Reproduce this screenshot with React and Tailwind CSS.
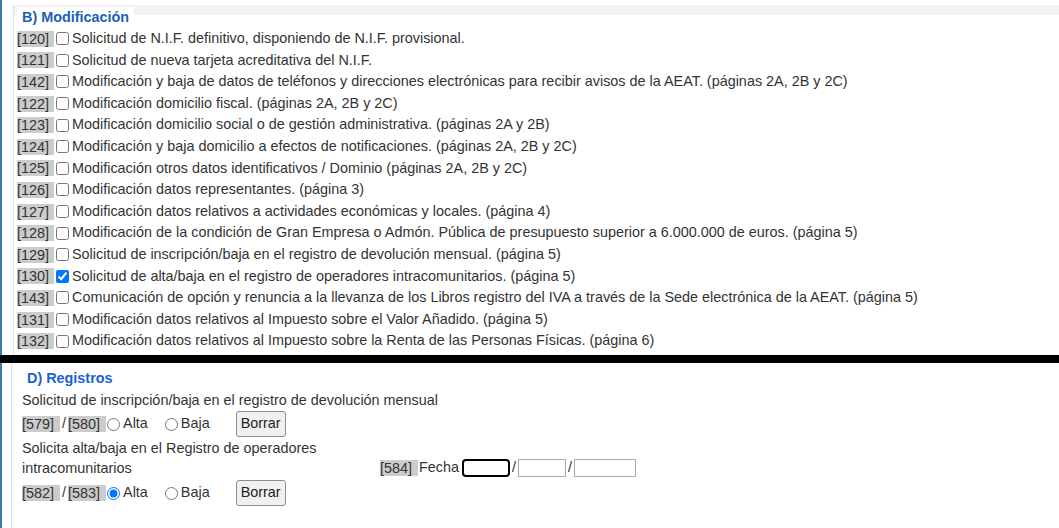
import React from 'react';

const rows = [
  ['120', 'Solicitud de N.I.F. definitivo, disponiendo de N.I.F. provisional.'],
  ['121', 'Solicitud de nueva tarjeta acreditativa del N.I.F.'],
  ['142', 'Modificación y baja de datos de teléfonos y direcciones electrónicas para recibir avisos de la AEAT. (páginas 2A, 2B y 2C)'],
  ['122', 'Modificación domicilio fiscal. (páginas 2A, 2B y 2C)'],
  ['123', 'Modificación domicilio social o de gestión administrativa. (páginas 2A y 2B)'],
  ['124', 'Modificación y baja domicilio a efectos de notificaciones. (páginas 2A, 2B y 2C)'],
  ['125', 'Modificación otros datos identificativos / Dominio (páginas 2A, 2B y 2C)'],
  ['126', 'Modificación datos representantes. (página 3)'],
  ['127', 'Modificación datos relativos a actividades económicas y locales. (página 4)'],
  ['128', 'Modificación de la condición de Gran Empresa o Admón. Pública de presupuesto superior a 6.000.000 de euros. (página 5)'],
  ['129', 'Solicitud de inscripción/baja en el registro de devolución mensual. (página 5)'],
  ['130', 'Solicitud de alta/baja en el registro de operadores intracomunitarios. (página 5)', true],
  ['143', 'Comunicación de opción y renuncia a la llevanza de los Libros registro del IVA a través de la Sede electrónica de la AEAT. (página 5)'],
  ['131', 'Modificación datos relativos al Impuesto sobre el Valor Añadido. (página 5)'],
  ['132', 'Modificación datos relativos al Impuesto sobre la Renta de las Personas Físicas. (página 6)'],
  ['133', 'Modificación datos relativos al Impuesto sobre Sociedades. (página 6)'],
];

// casilla gris tipo [120]
const Casilla = ({ n, className }) => (
  <span className={`bg-[#cccccc] leading-[16px] whitespace-nowrap ${className || 'pr-[6px]'}`}>[{n}]</span>
);

const Radio = ({ checked, name }) => (
  <input type="radio" name={name} defaultChecked={checked} className="m-0 w-[13px] h-[13px] ml-[1px] mr-[3px]" />
);

const Borrar = ({ className }) => (
  <button className={`h-[26px] px-[4px] border border-[#8f8f8f] rounded-[3px] bg-[#f0f0f0] text-[#222] ${className || ''}`}>Borrar</button>
);

export default function App() {
  return (
    <div className="w-[1059px] h-[528px] overflow-hidden bg-white flex flex-col text-[#333] text-[14.4px]" style={{ fontFamily: '"Liberation Sans", Arial, sans-serif' }}>
      {/* B) Modificación */}
      <div className="h-[355px] overflow-hidden border-l-2 border-[#3b7da3] pl-[11px] pt-[5px] shrink-0">
        <div className="h-full border-l border-[#e2e2e2]">
          <div className="h-[10px] bg-[#f3f3f3]" />
          <div className="-mt-[8px] ml-[3px] w-fit bg-white px-[5px] h-[20px] leading-[20px] font-bold text-[#1a5fb8]">
            B) Modificación
          </div>
          <div className="pl-[3px] pt-[1px]">
            {rows.map(([n, text, checked]) => (
              <div key={n} className="h-[21.6px] flex items-center whitespace-nowrap">
                <Casilla n={n} className="pr-[5px]" />
                <input type="checkbox" defaultChecked={checked} className="m-0 w-[13px] h-[13px] ml-[2px] mr-[3px]" />
                <span>{text}</span>
              </div>
            ))}
          </div>
        </div>
      </div>

      <div className="h-[8px] bg-black shrink-0" />

      {/* D) Registros */}
      <div className="flex-1 border-l-2 border-[#3b7da3] pl-[9px]">
        <div className="h-full border-l border-[#e2e2e2] pt-[5px]">
          <div className="h-[20px] leading-[20px] pl-[15px] font-bold text-[#1a62cc]">D) Registros</div>
          <div className="mt-[2px] leading-[20px] pl-[10px]">Solicitud de inscripción/baja en el registro de devolución mensual</div>
          <div className="mt-[1px] h-[26px] flex items-center pl-[10px] whitespace-nowrap">
            <Casilla n="579" />
            <span className="mx-[2px]">/</span>
            <Casilla n="580" />
            <Radio name="r1" />
            <span>Alta</span>
            <span className="ml-[16px]" />
            <Radio name="r1" />
            <span>Baja</span>
            <Borrar className="ml-[26px]" />
          </div>
          <div className="mt-[1px] flex pl-[10px]">
            <div className="w-[358px] leading-[20px]">Solicita alta/baja en el Registro de operadores intracomunitarios</div>
            <div className="self-end h-[20px] flex items-center whitespace-nowrap">
              <Casilla n="584" />
              <span className="ml-[1px] mr-[3px]">Fecha</span>
              <input type="text" className="w-[48px] h-[18px] border-2 border-black rounded-[4px] outline-none" />
              <span className="mx-[2px]">/</span>
              <input type="text" className="w-[48px] h-[18px] border border-[#aaaaaa] outline-none" />
              <span className="mx-[2px]">/</span>
              <input type="text" className="w-[62px] h-[18px] border border-[#aaaaaa] outline-none" />
            </div>
          </div>
          <div className="mt-[2px] h-[26px] flex items-center pl-[10px] whitespace-nowrap">
            <Casilla n="582" />
            <span className="mx-[2px]">/</span>
            <Casilla n="583" />
            <Radio name="r2" checked />
            <span>Alta</span>
            <span className="ml-[16px]" />
            <Radio name="r2" />
            <span>Baja</span>
            <Borrar className="ml-[26px]" />
          </div>
        </div>
      </div>
    </div>
  );
}
